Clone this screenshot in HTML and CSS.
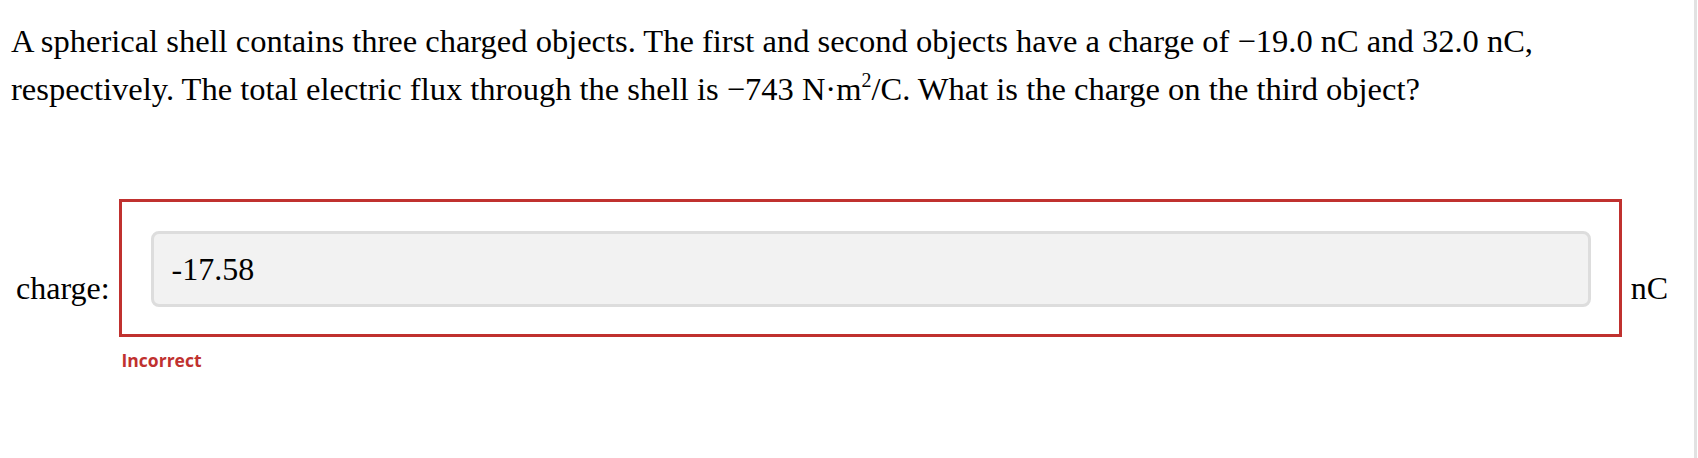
FILE: index.html
```html
<!DOCTYPE html>
<html lang="en">
<head>
    <meta charset="UTF-8">
    <meta name="viewport" content="width=device-width, initial-scale=1.0">
    <title>Electric Flux Question</title>
    <link rel="stylesheet" href="styles.css">
</head>
<body>

    <div class="page">
        <p class="question">A spherical shell contains three charged objects. The first and second objects have a charge of −19.0 nC and 32.0 nC, respectively. The total electric flux through the shell is −743 N·m<sup>2</sup>/C. What is the charge on the third object?</p>

        <div class="answer-row">
            <span class="label">charge:</span>
            <div class="field-wrap">
                <div class="field incorrect">
                    <input type="text" class="answer-input" value="-17.58">
                </div>
                <div class="feedback">Incorrect</div>
            </div>
            <span class="unit">nC</span>
        </div>
    </div>

</body>
</html>
```

FILE: styles.css
```css
body {
    margin: 0;
    padding: 0;
    background-color: #ffffff;
    font-family: "Liberation Serif", "Times New Roman", serif;
    color: #000000;
}

.page {
    box-sizing: border-box;
    width: 1697px;
    min-height: 100vh;
    padding: 0 0 0 11px;
    border-right: 3px solid #e2e2e2;
}

.question {
    max-width: 1580px;
    font-size: 32.5px;
    line-height: 48px;
    margin: 0;
    padding-top: 17px;
}

.question sup {
    font-size: 20px;
    line-height: 0;
    vertical-align: 13px;
}

.answer-row {
    display: flex;
    align-items: flex-start;
    margin-top: 86px;
    padding-left: 5px;
}

.label,
.unit {
    font-size: 32px;
    line-height: 32px;
    padding-top: 73px;
}

.label {
    margin-right: 9px;
}

.unit {
    margin-left: 9px;
    margin-right: 26px;
}

.field-wrap {
    flex: 1;
}

.field {
    box-sizing: border-box;
    padding: 29px 28px 27px 29px;
    border: 3px solid #c0312f;
}

.answer-input {
    box-sizing: border-box;
    display: block;
    width: 100%;
    height: 76px;
    padding: 0 18px;
    border: 3px solid #dddddd;
    border-radius: 8px;
    background-color: #f2f2f2;
    font-family: "Liberation Serif", "Times New Roman", serif;
    font-size: 32px;
    color: #000000;
    outline: none;
}

.feedback {
    font-family: "Open Sans", sans-serif;
    font-weight: 700;
    font-size: 17.5px;
    color: #c0312f;
    margin-top: 11px;
    padding-left: 3px;
}
```
